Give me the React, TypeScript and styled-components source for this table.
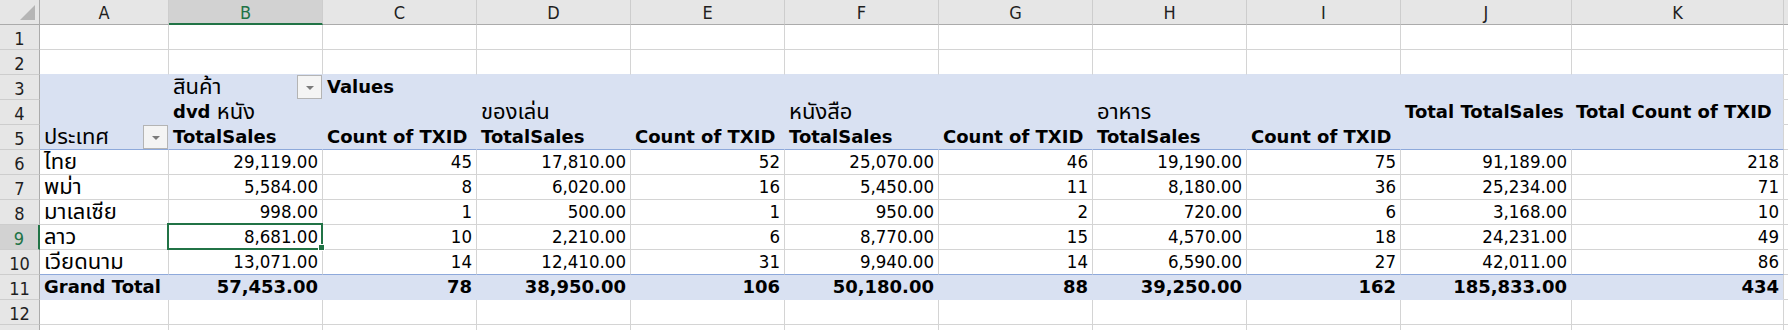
import React from "react";
import styled, { createGlobalStyle, css } from "styled-components";

const colors = {
  header: "#E6E6E6",
  headerActive: "#D2D2D2",
  headerLine: "#ABABAB",
  headerSep: "#CDCDCD",
  grid: "#D4D4D4",
  pivot: "#D9E1F2",
  pivotLine: "#8EA9DB",
  green: "#217346",
  text: "#000000",
};

const thai = `"Noto Sans Thai", "Tlwg Typo", "Loma", "Garuda", "Norasi"`;

const fonts = {
  regular: `"DejaVu Sans Condensed", "DejaVu Sans", ${thai}, sans-serif`,
  bold: `"DejaVu Sans", ${thai}, sans-serif`,
};

// column widths in px, each including its right gridline
const COLS = [129, 154, 154, 154, 154, 154, 154, 154, 154, 171, 212];
const LETTERS = ["A", "B", "C", "D", "E", "F", "G", "H", "I", "J", "K"];

const GlobalStyle = createGlobalStyle`
  html, body {
    margin: 0;
    padding: 0;
    background: #ffffff;
    overflow: hidden;
  }
  body {
    font-family: ${fonts.regular};
  }
`;

const Sheet = styled.div`
  display: grid;
  grid-template-columns: 40px ${COLS.map((w) => `${w}px`).join(" ")} 1fr;
  grid-auto-rows: 25px;
  width: 1788px;
  height: 330px;
  overflow: hidden;
`;

const Corner = styled.div`
  box-sizing: border-box;
  display: flex;
  align-items: flex-end;
  justify-content: flex-end;
  padding: 0 3px 3px 0;
  background: ${colors.header};
  border-right: 1px solid ${colors.headerLine};
  border-bottom: 1px solid ${colors.headerLine};
`;

const ColHead = styled.div<{ $active?: boolean }>`
  box-sizing: border-box;
  display: flex;
  align-items: center;
  justify-content: center;
  background: ${({ $active }) => ($active ? colors.headerActive : colors.header)};
  color: ${({ $active }) => ($active ? colors.green : "#1f1f1f")};
  border-right: 1px solid ${colors.headerSep};
  border-bottom: ${({ $active }) =>
    $active ? `2px solid ${colors.green}` : `1px solid ${colors.headerLine}`};
  font-family: ${fonts.regular};
  font-size: 18px;
  padding-top: 1px;
`;

const RowHead = styled.div<{ $active?: boolean }>`
  box-sizing: border-box;
  display: flex;
  align-items: center;
  justify-content: center;
  background: ${({ $active }) => ($active ? colors.headerActive : colors.header)};
  color: ${({ $active }) => ($active ? colors.green : "#1f1f1f")};
  border-right: ${({ $active }) =>
    $active ? `2px solid ${colors.green}` : `1px solid ${colors.headerLine}`};
  border-bottom: 1px solid ${colors.headerSep};
  font-family: ${fonts.regular};
  font-size: 18px;
  padding-top: 3px;
`;

type Tone = "plain" | "pivot";

const Cell = styled.div<{
  $tone: Tone;
  $bottom: string;
  $right: string;
  $alignRight?: boolean;
  $bold?: boolean;
  $selected?: boolean;
}>`
  position: relative;
  box-sizing: border-box;
  display: flex;
  align-items: flex-end;
  justify-content: ${({ $alignRight }) => ($alignRight ? "flex-end" : "flex-start")};
  padding: 0 4px 2px 4px;
  background: ${({ $tone }) => ($tone === "pivot" ? colors.pivot : "#ffffff")};
  border-right: 1px solid ${({ $right }) => $right};
  border-bottom: 1px solid ${({ $bottom }) => $bottom};
  font-family: ${({ $bold }) => ($bold ? fonts.bold : fonts.regular)};
  font-weight: ${({ $bold }) => ($bold ? 700 : 400)};
  font-size: ${({ $bold }) => ($bold ? "18px" : "18.5px")};
  line-height: 20px;
  white-space: nowrap;
  color: ${colors.text};

  ${({ $selected }) =>
    $selected &&
    css`
      z-index: 2;
      &::after {
        content: "";
        position: absolute;
        left: -2px;
        top: -2px;
        right: -1px;
        bottom: -1px;
        border: 2px solid ${colors.green};
        pointer-events: none;
      }
    `}
`;

// Thai glyphs in the original come from a larger, non-bold face
const Thai = styled.span`
  font-family: ${fonts.regular};
  font-weight: 400;
  font-size: 22px;
  line-height: 21px;
`;

// pivot dropdown, sits over the right end of its cell
const FilterButton = styled.span`
  position: absolute;
  top: 0;
  right: 0;
  width: 25px;
  height: 24px;
  box-sizing: border-box;
  border: 1px solid #b4b4b4;
  background: #f4f4f4;
  display: flex;
  align-items: center;
  justify-content: center;

  &::before {
    content: "";
    border-left: 4px solid transparent;
    border-right: 4px solid transparent;
    border-top: 4px solid #7a7a7a;
    margin-top: 1px;
  }
`;

const FillHandle = styled.span`
  position: absolute;
  right: -3px;
  bottom: -2px;
  width: 7px;
  height: 7px;
  box-sizing: border-box;
  background: ${colors.green};
  border: 1px solid #ffffff;
  z-index: 3;
`;

type Spec = {
  text?: React.ReactNode;
  right?: boolean;
  bold?: boolean;
  filter?: boolean;
};

type Row = {
  n: number;
  label?: boolean;
  tone: Tone;
  bottom: "grid" | "line" | "fill";
  cells: Spec[];
};

const num = (v: string, bold = false): Spec => ({ text: v, right: true, bold });

const dataRow = (n: number, name: string, values: string[]): Row => ({
  n,
  tone: "plain",
  bottom: n === 10 ? "line" : "grid",
  cells: [{ text: <Thai>{name}</Thai> }, ...values.map((v) => num(v))],
});

const rows: Row[] = [
  { n: 1, tone: "plain", bottom: "grid", cells: [] },
  { n: 2, tone: "plain", bottom: "fill", cells: [] },
  {
    n: 3,
    tone: "pivot",
    bottom: "fill",
    cells: [{}, { text: <Thai>สินค้า</Thai>, filter: true }, { text: "Values", bold: true }],
  },
  {
    n: 4,
    tone: "pivot",
    bottom: "fill",
    cells: [
      {},
      {
        text: (
          <>
            dvd&nbsp;<Thai>หนัง</Thai>
          </>
        ),
        bold: true,
      },
      {},
      { text: <Thai>ของเล่น</Thai> },
      {},
      { text: <Thai>หนังสือ</Thai> },
      {},
      { text: <Thai>อาหาร</Thai> },
      {},
      { text: "Total TotalSales", bold: true },
      { text: "Total Count of TXID", bold: true },
    ],
  },
  {
    n: 5,
    tone: "pivot",
    bottom: "line",
    cells: [
      { text: <Thai>ประเทศ</Thai>, filter: true },
      { text: "TotalSales", bold: true },
      { text: "Count of TXID", bold: true },
      { text: "TotalSales", bold: true },
      { text: "Count of TXID", bold: true },
      { text: "TotalSales", bold: true },
      { text: "Count of TXID", bold: true },
      { text: "TotalSales", bold: true },
      { text: "Count of TXID", bold: true },
    ],
  },
  dataRow(6, "ไทย", ["29,119.00", "45", "17,810.00", "52", "25,070.00", "46", "19,190.00", "75", "91,189.00", "218"]),
  dataRow(7, "พม่า", ["5,584.00", "8", "6,020.00", "16", "5,450.00", "11", "8,180.00", "36", "25,234.00", "71"]),
  dataRow(8, "มาเลเซีย", ["998.00", "1", "500.00", "1", "950.00", "2", "720.00", "6", "3,168.00", "10"]),
  dataRow(9, "ลาว", ["8,681.00", "10", "2,210.00", "6", "8,770.00", "15", "4,570.00", "18", "24,231.00", "49"]),
  dataRow(10, "เวียดนาม", ["13,071.00", "14", "12,410.00", "31", "9,940.00", "14", "6,590.00", "27", "42,011.00", "86"]),
  {
    n: 11,
    tone: "pivot",
    bottom: "fill",
    cells: [
      { text: "Grand Total", bold: true },
      ...["57,453.00", "78", "38,950.00", "106", "50,180.00", "88", "39,250.00", "162", "185,833.00", "434"].map(
        (v) => num(v, true)
      ),
    ],
  },
  { n: 12, tone: "plain", bottom: "grid", cells: [] },
  // only the top few pixels of row 13 are in view, its number is hidden
  { n: 13, label: false, tone: "plain", bottom: "grid", cells: [] },
];

const ACTIVE_ROW = 9;
const ACTIVE_COL = 1;

const bottomColor = (row: Row) =>
  row.bottom === "line" ? colors.pivotLine : row.bottom === "fill" ? colors.pivot : colors.grid;

const CornerMark = () => (
  <svg width="16" height="16" viewBox="0 0 16 16">
    <polygon points="15,0 15,15 0,15" fill="#b5b5b5" />
  </svg>
);

const App = () => {
  return (
    <>
      <GlobalStyle />
      <Sheet>
        <Corner>
          <CornerMark />
        </Corner>
        {LETTERS.map((l, i) => (
          <ColHead key={l} $active={i === ACTIVE_COL}>
            {l}
          </ColHead>
        ))}
        <ColHead />

        {rows.map((row) => (
          <React.Fragment key={row.n}>
            <RowHead $active={row.n === ACTIVE_ROW}>{row.label === false ? null : row.n}</RowHead>
            {LETTERS.map((l, i) => {
              const spec = row.cells[i] || {};
              const selected = row.n === ACTIVE_ROW && i === ACTIVE_COL;
              const right =
                row.tone === "pivot" && i < LETTERS.length - 1 ? colors.pivot : colors.grid;
              return (
                <Cell
                  key={l}
                  $tone={row.tone}
                  $bottom={bottomColor(row)}
                  $right={right}
                  $alignRight={spec.right}
                  $bold={spec.bold}
                  $selected={selected}
                >
                  {spec.text}
                  {spec.filter && <FilterButton />}
                  {selected && <FillHandle />}
                </Cell>
              );
            })}
            <Cell $tone="plain" $bottom={colors.grid} $right={colors.grid} />
          </React.Fragment>
        ))}
      </Sheet>
    </>
  );
};

export default App;
